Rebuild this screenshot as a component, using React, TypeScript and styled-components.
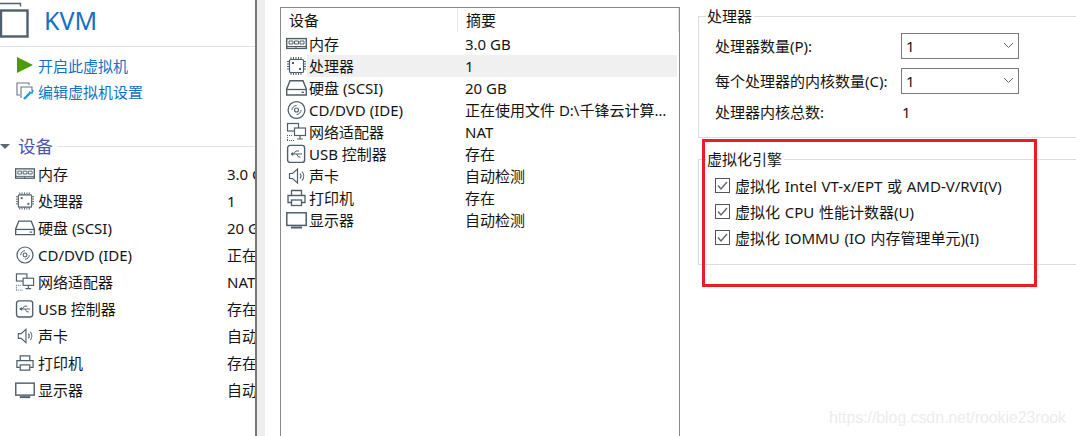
import React from "react";
import styled, { createGlobalStyle } from "styled-components";

const Global = createGlobalStyle`
  html, body { margin: 0; padding: 0; background: #fff; }
  body { font-family: "Noto Sans", "Noto Sans CJK SC", sans-serif; color: #141414; }
  * { box-sizing: border-box; }
`;

const Page = styled.div`
  position: relative;
  width: 1076px;
  height: 436px;
  overflow: hidden;
  display: grid;
  grid-template-columns: 255px 10px 433px 1fr;
  background: #fff;
`;

/* ---------- left column ---------- */
const Sidebar = styled.aside`
  height: 436px;
  overflow: hidden;
  display: flex;
  flex-direction: column;
`;
const TitleBar = styled.header`
  height: 47px;
  flex: none;
  display: flex;
  align-items: flex-start;
  gap: 15px;
  border-bottom: 1px solid #e2e2e2;
`;
const TitleText = styled.h1`
  margin: 0;
  font-size: 25px;
  line-height: 40px;
  font-weight: 400;
  color: #1470c4;
`;
const Actions = styled.div`
  display: flex;
  flex-direction: column;
  gap: 4px;
  padding: 7px 0 0 16px;
`;
const ActionLink = styled.div`
  height: 22px;
  display: flex;
  align-items: center;
  gap: 4px;
  font-size: 15px;
  color: #1470c4;
`;
const Section = styled.div`
  margin-top: 32px;
  height: 24px;
  display: flex;
  align-items: center;
`;
const Caret = styled.span`
  flex: none;
  width: 0;
  height: 0;
  margin-right: 8px;
  border-left: 5px solid transparent;
  border-right: 5px solid transparent;
  border-top: 5px solid #5c6a75;
`;
const SectionTitle = styled.span`
  font-size: 17.5px;
  line-height: 24px;
  color: #4a55b0;
  margin-right: 4px;
`;
const SectionRule = styled.span`
  flex: 1;
  height: 1px;
  background: #e2e2e2;
`;
const SideList = styled.div`
  margin-top: 2px;
  display: flex;
  flex-direction: column;
`;
const SideRow = styled.div`
  height: 27px;
  display: grid;
  grid-template-columns: 15px 20px 3px 189px 1fr;
  align-items: center;
  font-size: 15px;
  white-space: nowrap;
`;
const SideName = styled.span`
  grid-column: 4;
`;
const SideValue = styled.span`
  grid-column: 5;
  overflow: hidden;
`;
const IconSlot = styled.span`
  grid-column: 2;
  display: flex;
  align-items: center;
  justify-content: center;
`;

/* ---------- splitter ---------- */
const Splitter = styled.div`
  height: 436px;
  border-left: 2px solid #777;
  background: #eeeeee;
`;

/* ---------- device table ---------- */
const CenterCol = styled.section`
  padding: 7px 0 0 15px;
  width: 415px;
`;
const Table = styled.div`
  width: 400px;
  height: 440px;
  border: 1px solid #8a8a8a;
  border-bottom: none;
`;
const HeadRow = styled.div`
  height: 25px;
  display: grid;
  grid-template-columns: 177px 1fr;
  font-size: 15px;
`;
const HeadCell = styled.div`
  padding-left: 8px;
  height: 24px;
  line-height: 24px;
  border-right: 1px solid #e4e4e4;
`;
const Row = styled.div`
  height: 22px;
  display: grid;
  grid-template-columns: 4px 22px 158px 1fr 2px;
  align-items: center;
  font-size: 15px;
  line-height: 22px;
  white-space: nowrap;
`;
const RowIcon = styled.span`
  grid-column: 2;
  display: flex;
  justify-content: center;
  align-items: center;
`;
const RowName = styled.span<{ $on?: boolean }>`
  height: 22px;
  padding-left: 2px;
  background: ${(p) => (p.$on ? "#f0f0f0" : "transparent")};
`;
const RowValue = styled.span<{ $on?: boolean }>`
  height: 22px;
  padding-right: 2px;
  overflow: hidden;
  text-overflow: ellipsis;
  background: ${(p) => (p.$on ? "#f0f0f0" : "transparent")};
`;

/* ---------- settings ---------- */
const SettingsCol = styled.section`
  display: flex;
  flex-direction: column;
  gap: 11px;
  padding-top: 6px;
`;
const Group = styled.fieldset<{ $h: number }>`
  margin: 0;
  padding: 0;
  width: 100%;
  height: ${(p) => p.$h}px;
  border: 1px solid #dcdcdc;
  border-right: none;
  min-width: 0;
`;
const GroupTitle = styled.legend`
  margin-left: 7px;
  padding: 0 2px 0 1px;
  font-size: 15px;
  line-height: 20px;
`;
const Form = styled.div`
  display: grid;
  grid-template-columns: 186px 118px;
  grid-template-rows: 35px 35px 27px;
  padding: 2px 0 0 16px;
  font-size: 15px;
  align-items: center;
  white-space: nowrap;
`;
const Select = styled.div`
  height: 26px;
  border: 1px solid #7a7a7a;
  padding: 0 4px 0 4px;
  display: flex;
  align-items: center;
  justify-content: space-between;
`;
const Total = styled.span`
  padding-left: 1px;
`;
const Checks = styled.div`
  display: flex;
  flex-direction: column;
  padding: 3px 0 0 16px;
`;
const CheckRow = styled.label`
  height: 26px;
  display: flex;
  align-items: center;
  gap: 5px;
  font-size: 15px;
  word-spacing: 0.8px;
  white-space: nowrap;
`;
const CheckBox = styled.span`
  width: 15px;
  height: 15px;
  flex: none;
  border: 1px solid #555;
  display: flex;
  align-items: center;
  justify-content: center;
`;

/* ---------- overlays ---------- */
const Annotation = styled.div`
  position: absolute;
  left: 702px;
  top: 139px;
  width: 335px;
  height: 148px;
  border: 3px solid #ed1c24;
  pointer-events: none;
`;
const Watermark = styled.div`
  position: absolute;
  right: 10px;
  top: 408px;
  font-family: "Liberation Sans", sans-serif;
  font-size: 15.8px;
  line-height: 20px;
  color: #ececec;
`;

/* ---------- icons ---------- */
const SL = "#4f5f69";
const Svg = ({ children }: { children: React.ReactNode }) => (
  <svg width={21} height={20} viewBox="0 0 21 20" fill="none" stroke={SL} strokeWidth={1.2}>
    {children}
  </svg>
);
const Memory = () => (
  <Svg>
    <rect x="0.7" y="4.6" width="19.6" height="9.8" strokeWidth={1.4} />
    <path d="M3 7h4v3H3zM8.500 7h4v3h-4zM14 7h4v3h-4z" strokeWidth={1} />
    <path d="M1 12.500h19M10 13v2" strokeWidth={1} />
  </Svg>
);
const Cpu = () => (
  <Svg>
    <rect x="3.500" y="3.500" width="14" height="13" rx="1" strokeWidth={1.2} />
    <path d="M5 1v2M7.500 1v2M10 1v2M12.500 1v2M15 1v2M5 17v2M7.500 17v2M10 17v2M12.500 17v2M15 17v2M1 5.500h2M1 8h2M1 10.500h2M1 13h2M18 5.500h2M18 8h2M18 10.500h2M18 13h2" strokeWidth={1} />
    <rect x="6" y="6" width="2" height="2" fill={SL} stroke="none" />
    <rect x="13" y="12" width="2" height="2" fill={SL} stroke="none" />
  </Svg>
);
const Disk = () => (
  <Svg>
    <path d="M4 2.700h13l3.300 8.300v6H.7v-6z" strokeWidth={1.4} />
    <path d="M1 11.500h19" strokeWidth={1.3} />
    <path d="M15.500 14.300h2.500" strokeWidth={1.3} />
  </Svg>
);
const Disc = () => (
  <Svg>
    <circle cx="10.500" cy="10" r="8.400" strokeWidth={1.3} />
    <circle cx="10.500" cy="10" r="2" strokeWidth={1.1} />
    <path d="M6 10a4.500 4.500 0 0 1 4.500-4.500M15 10a4.500 4.500 0 0 1-4.500 4.500" strokeWidth={1} />
  </Svg>
);
const Network = () => (
  <Svg>
    <rect x="1.500" y="1.500" width="11" height="7.500" strokeWidth={1.2} />
    <rect x="8.500" y="6" width="11" height="7.500" fill="#fff" strokeWidth={1.2} />
    <path d="M14 13.500v3M11 17h6" strokeWidth={1.2} />
    <path d="M1 13.500h5M1 18.500h8M1.500 15v3" strokeWidth={1} strokeDasharray="1 1" />
  </Svg>
);
const Usb = () => (
  <Svg>
    <rect x="1.600" y="1.400" width="17" height="17" rx="2.500" strokeWidth={1.4} />
    <path d="M5 10h11M7.500 10l2.500-3h3M10.500 10l2 3h2" strokeWidth={1} />
    <path d="M5 10l2-1.500v3z" fill={SL} strokeWidth={0.6} />
  </Svg>
);
const Speaker = () => (
  <Svg>
    <path d="M3.500 7.500h3l5-4.500v14l-5-4.500h-3z" strokeWidth={1.2} />
    <path d="M14 7.500a4 4 0 0 1 0 5M16 5.500a7 7 0 0 1 0 9" strokeWidth={1.1} />
  </Svg>
);
const Printer = () => (
  <Svg>
    <path d="M5.500 7V2.500h10V7" strokeWidth={1.3} />
    <path d="M5 14.500H2V7.500h17v7h-3" strokeWidth={1.3} />
    <rect x="5.500" y="12" width="10" height="5.500" strokeWidth={1.3} />
  </Svg>
);
const Monitor = () => (
  <Svg>
    <rect x="0.800" y="2.800" width="19.400" height="12.600" strokeWidth={1.5} />
    <path d="M5 17.500h11" strokeWidth={2} />
  </Svg>
);

const VmIcon = () => (
  <svg width="29" height="38" viewBox="0 0 29 38" fill="none" stroke="#4f5f6b">
    <path d="M0 3.500h20.500v3" strokeWidth={1.4} />
    <rect x="1" y="10.500" width="26.500" height="26" strokeWidth={2.4} />
  </svg>
);
const PlayIcon = () => (
  <svg width="18" height="18" viewBox="0 0 18 18">
    <path d="M1 1l16 8-16 8z" fill="#4f9a0a" />
  </svg>
);
const EditIcon = () => (
  <svg width="18" height="18" viewBox="0 0 18 18" fill="none">
    <path d="M4 13H1V1h12v2" stroke="#6a7780" strokeWidth={1.1} />
    <path d="M5 16V5h11v4" stroke="#6a7780" strokeWidth={1.1} />
    <path d="M8 17l6-6" stroke="#1c9ad6" strokeWidth={2.4} />
    <path d="M13 10l3 1 1-3" stroke="#1c9ad6" strokeWidth={1.6} />
  </svg>
);
const Chevron = () => (
  <svg width="11" height="7" viewBox="0 0 11 7" fill="none">
    <path d="M1 1l4.500 4.500L10 1" stroke="#666" strokeWidth={1} />
  </svg>
);
const Tick = () => (
  <svg width="13" height="13" viewBox="0 0 13 13" fill="none">
    <path d="M2 6.500l3 3.500 6-7" stroke="#666" strokeWidth={1.4} />
  </svg>
);

const devices: { icon: React.FC; name: string; value: string }[] = [
  { icon: Memory, name: "内存", value: "3.0 GB" },
  { icon: Cpu, name: "处理器", value: "1" },
  { icon: Disk, name: "硬盘 (SCSI)", value: "20 GB" },
  { icon: Disc, name: "CD/DVD (IDE)", value: "正在使用文件 D:\\千锋云计算虚拟机镜像文件目录" },
  { icon: Network, name: "网络适配器", value: "NAT" },
  { icon: Usb, name: "USB 控制器", value: "存在" },
  { icon: Speaker, name: "声卡", value: "自动检测" },
  { icon: Printer, name: "打印机", value: "存在" },
  { icon: Monitor, name: "显示器", value: "自动检测" },
];

const checks = [
  "虚拟化 Intel VT-x/EPT 或 AMD-V/RVI(V)",
  "虚拟化 CPU 性能计数器(U)",
  "虚拟化 IOMMU (IO 内存管理单元)(I)",
];

export default function App() {
  return (
    <Page>
      <Global />
      <Sidebar>
        <TitleBar>
          <VmIcon />
          <TitleText>KVM</TitleText>
        </TitleBar>
        <Actions>
          <ActionLink><PlayIcon />开启此虚拟机</ActionLink>
          <ActionLink><EditIcon />编辑虚拟机设置</ActionLink>
        </Actions>
        <Section>
          <Caret />
          <SectionTitle>设备</SectionTitle>
          <SectionRule />
        </Section>
        <SideList>
          {devices.map(({ icon: I, name, value }) => (
            <SideRow key={name}>
              <IconSlot><I /></IconSlot>
              <SideName>{name}</SideName>
              <SideValue>{value}</SideValue>
            </SideRow>
          ))}
        </SideList>
      </Sidebar>
      <Splitter />
      <CenterCol>
        <Table>
          <HeadRow>
            <HeadCell>设备</HeadCell>
            <HeadCell>摘要</HeadCell>
          </HeadRow>
          {devices.map(({ icon: I, name, value }) => (
            <Row key={name}>
              <RowIcon><I /></RowIcon>
              <RowName $on={name === "处理器"}>{name}</RowName>
              <RowValue $on={name === "处理器"}>{value}</RowValue>
            </Row>
          ))}
        </Table>
      </CenterCol>
      <SettingsCol>
        <Group $h={132}>
          <GroupTitle>处理器</GroupTitle>
          <Form>
            <span>处理器数量(P):</span>
            <Select>1<Chevron /></Select>
            <span>每个处理器的内核数量(C):</span>
            <Select>1<Chevron /></Select>
            <span>处理器内核总数:</span>
            <Total>1</Total>
          </Form>
        </Group>
        <Group $h={116}>
          <GroupTitle>虚拟化引擎</GroupTitle>
          <Checks>
            {checks.map((c) => (
              <CheckRow key={c}>
                <CheckBox><Tick /></CheckBox>
                {c}
              </CheckRow>
            ))}
          </Checks>
        </Group>
      </SettingsCol>
      <Annotation />
      <Watermark>https://blog.csdn.net/rookie23rook</Watermark>
    </Page>
  );
}
